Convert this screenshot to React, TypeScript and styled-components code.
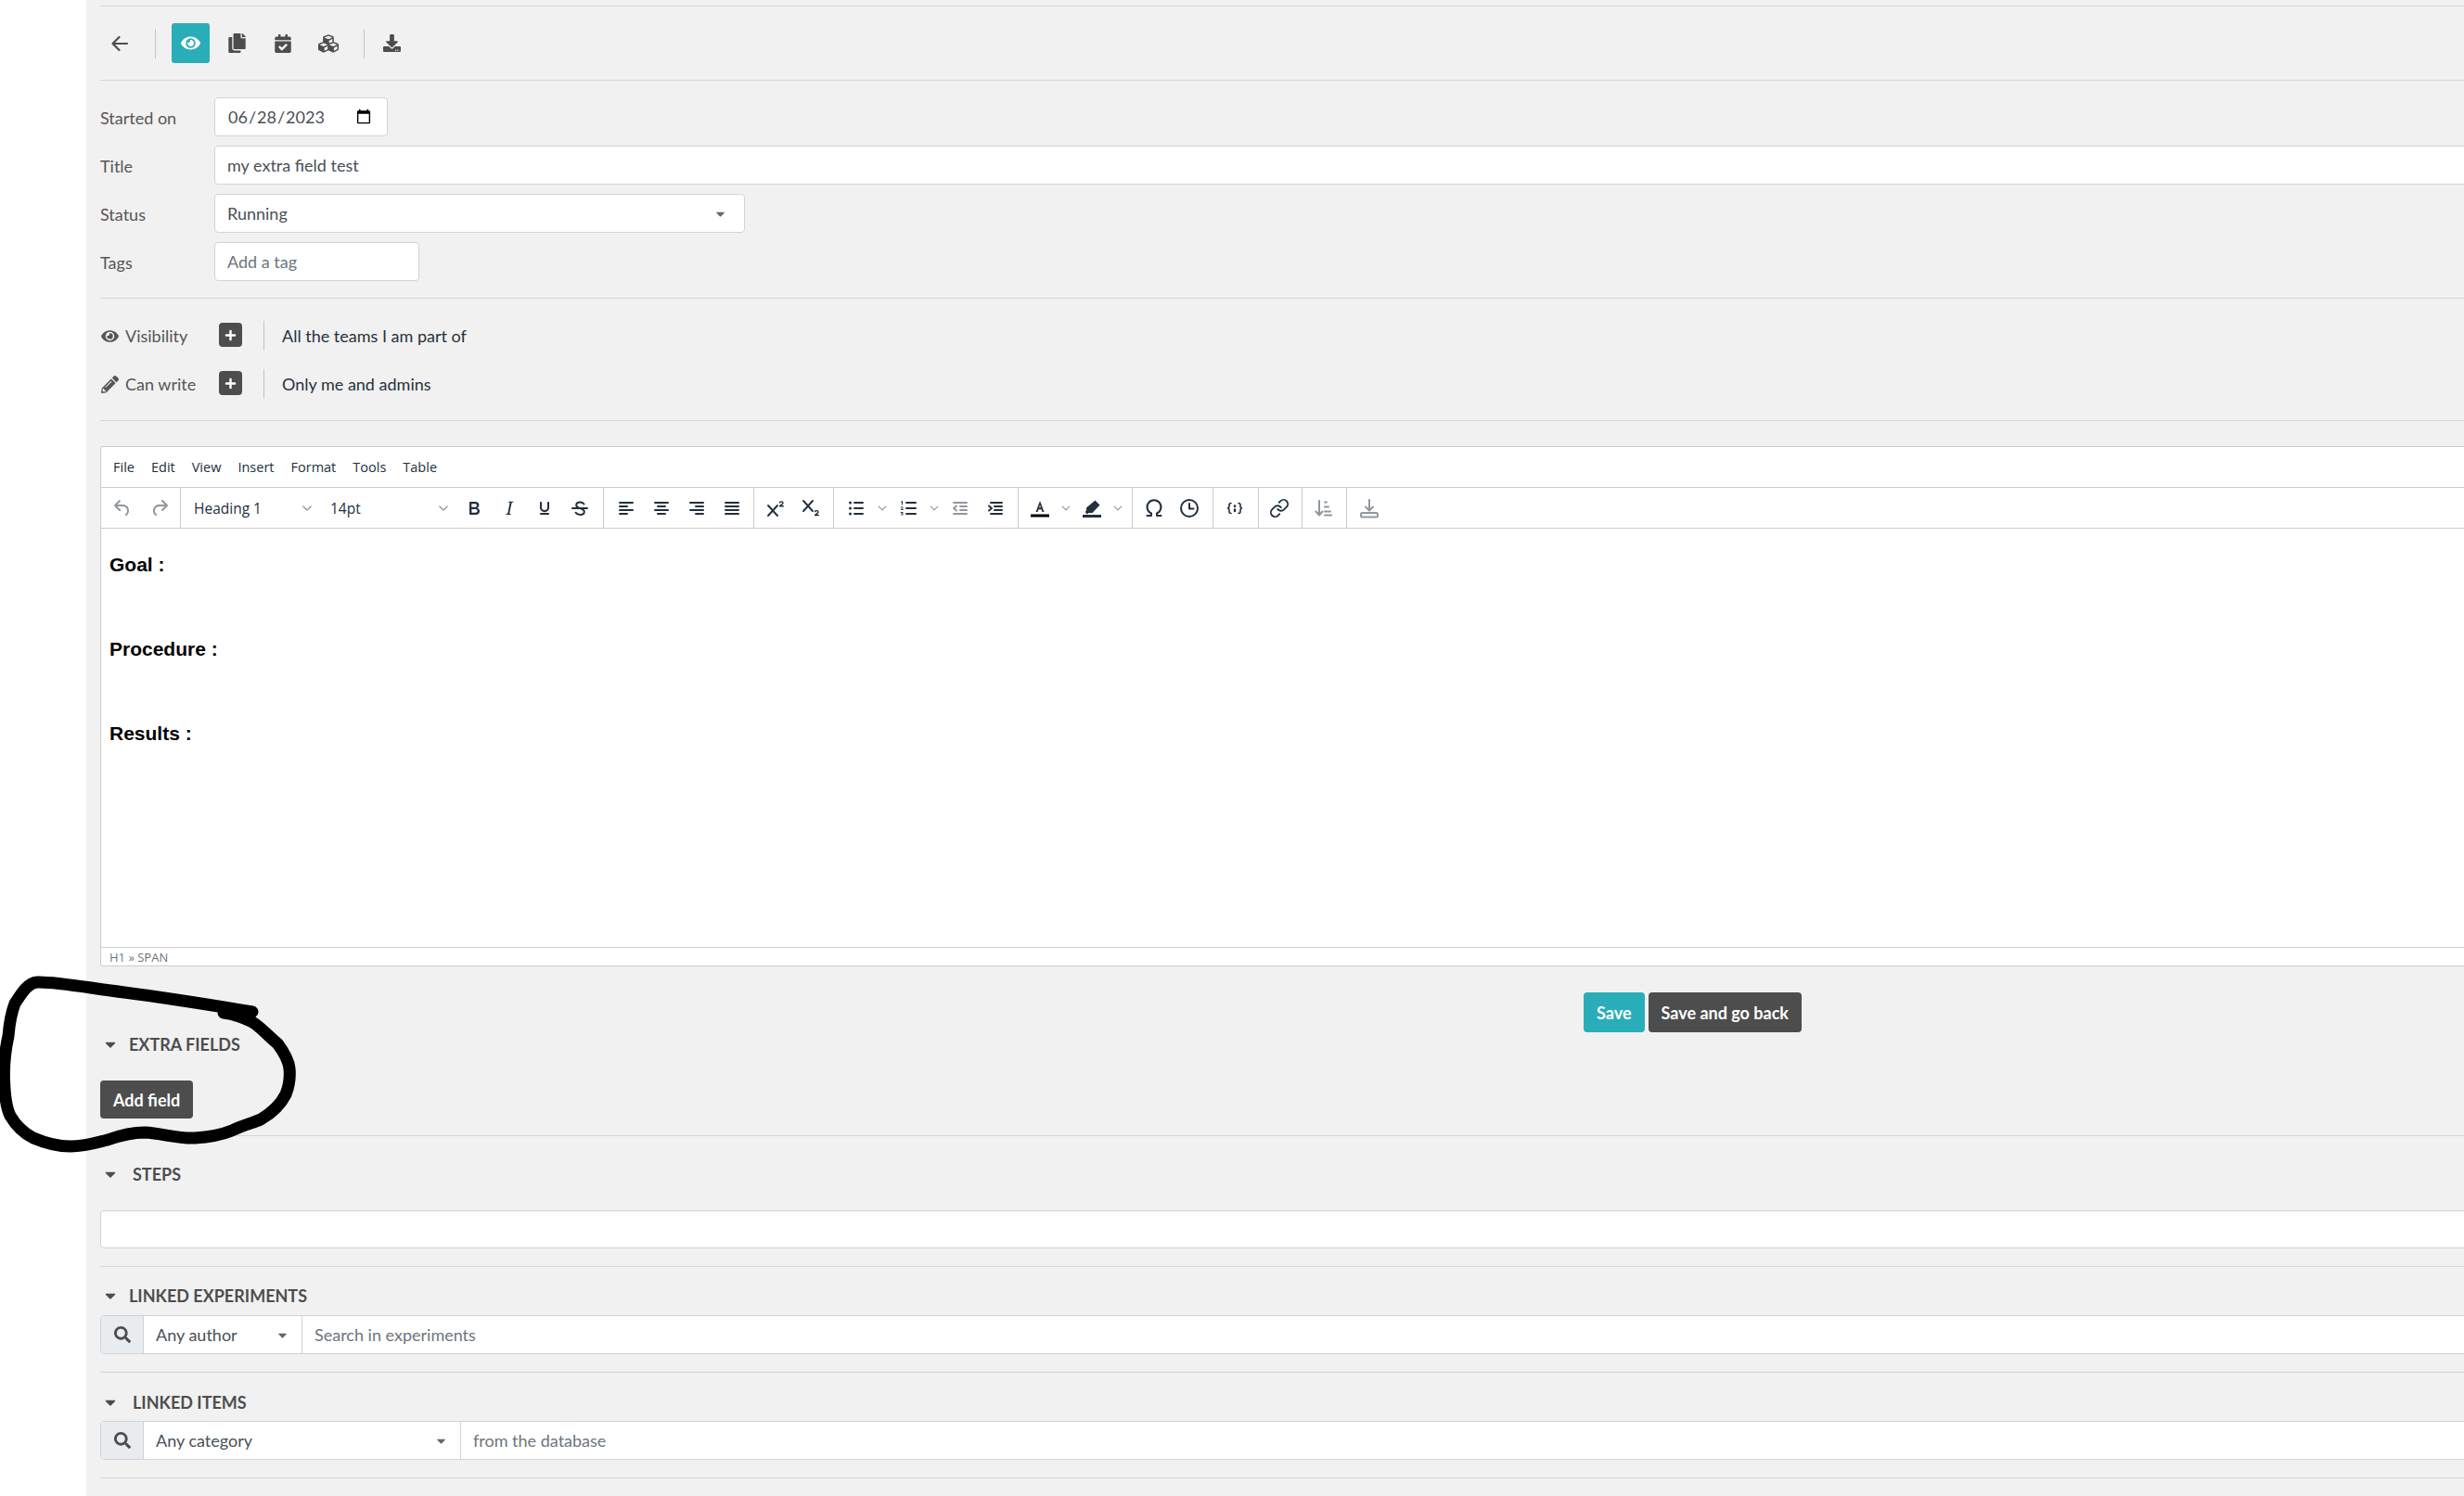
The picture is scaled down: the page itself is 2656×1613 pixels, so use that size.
import React from "react";
import styled, { createGlobalStyle } from "styled-components";
import { FaEye, FaCopy, FaCalendarCheck, FaCubes, FaDownload, FaPencilAlt, FaPlus, FaSearch, FaCaretDown } from "react-icons/fa";

const Global = createGlobalStyle`
  html, body { margin: 0; padding: 0; height: 1613px; overflow: hidden; background: #fff; }
  body { font-family: Lato, "Open Sans", sans-serif; font-size: 18px; color: #4d4d4d; }
  * { box-sizing: border-box; }
`;

const Page = styled.div`position: relative; width: 2656px; height: 1613px; overflow: hidden;`;
const Main = styled.main`
  margin-left: 93px; width: 3463px; height: 1613px; background: #f1f1f1;
  padding: 6px 0 0 15px;
`;
const Content = styled.div`width: 3433px;`;
const Rule = styled.hr<{ $mt?: number }>`
  margin: ${p => p.$mt ?? 0}px 0 0; border: 0; height: 1px; background: #d6d6d6;
`;
const TopBar = styled.nav`display: flex; align-items: center; height: 79px;`;
const BarGroup = styled.div`display: flex; gap: 8.5px; align-items: center;`;
const BarSep = styled.span<{ $ml: number; $mr: number }>`
  width: 1px; height: 32px; background: #c4c4c4; margin: 0 ${p => p.$mr}px 0 ${p => p.$ml}px;
`;
const BarButton = styled.button<{ $active?: boolean; $size?: number }>`
  width: 41px; height: 43px; border: 0; border-radius: 3px; padding: 0;
  display: flex; align-items: center; justify-content: center; font-size: ${p => p.$size ?? 19}px;
  background: ${p => (p.$active ? "#29aeb9" : "transparent")};
  color: ${p => (p.$active ? "#fff" : "#4d4d4d")};
`;

const Form = styled.form`padding: 18px 0 18px; display: grid; grid-template-columns: 123px 1fr; row-gap: 10px; align-items: center;`;
const FieldLabel = styled.label`font-size: 18px; color: #565656; line-height: 44px; height: 42px;`;
const fieldBase = `
  height: 42px; border: 1px solid #ced4da; border-radius: 4px; background: #fff;
  font-family: Lato, sans-serif; font-size: 18px; color: #495057; padding: 0 14px 0 13px; outline: none; display: flex; align-items: center;
`;
const Input = styled.input<{ $width?: number }>`
  ${fieldBase}
  width: ${p => (p.$width ? `${p.$width}px` : "100%")};
  &::placeholder { color: #6c757d; opacity: 1; }
`;
const DateInput = styled(Input)`padding-right: 7px;`;
const SelectBox = styled.div<{ $width: number }>`
  ${fieldBase}
  width: ${p => p.$width}px; justify-content: space-between; padding-right: 18px;
`;
const Caret = styled(FaCaretDown)`color: #666; font-size: 15px;`;

const PermWrap = styled.section`padding: 14px 0 13px;`;
const PermRow = styled.div`display: flex; align-items: center; height: 52px;`;
const PermLabel = styled.div`
  width: 128px; display: flex; align-items: center; gap: 7px; font-size: 18px; color: #565656;
  svg { width: 19px; height: 19px; flex: none; margin-left: 1px; }
`;
const PlusButton = styled.button`
  width: 25px; height: 26px; border: 0; border-radius: 4px; background: #4d4d4d; color: #fff;
  display: flex; align-items: center; justify-content: center; padding: 0; font-size: 13px; margin-top: -2px;
`;
const PermSep = styled.span`width: 1px; height: 32px; background: #c4c4c4; margin: 0 19px 0 23px;`;
const PermValue = styled.span`font-size: 18px; color: #29323c;`;

const Editor = styled.section`
  margin-top: 27px; height: 561px; background: #fff; border: 1px solid #ccc; border-radius: 3px;
  display: flex; flex-direction: column; color: #222f3e; font-family: "Open Sans", sans-serif;
`;
const MenuBar = styled.div`height: 44px; flex: none; display: flex; align-items: center; font-size: 14.5px; color: #222f3e; border-bottom: 1px solid #ccc;`;
const MenuItem = styled.span<{ $x: number }>`margin-left: ${p => p.$x}px;`;
const ToolBar = styled.div`height: 44px; flex: none; display: flex; border-bottom: 1px solid #ccc;`;
const ToolGroup = styled.div<{ $pl: number; $pr: number; $gap?: number; $last?: boolean }>`
  display: flex; align-items: center; flex: none; gap: ${p => p.$gap ?? 0}px;
  padding: 0 ${p => p.$pr}px 0 ${p => p.$pl}px;
  border-right: ${p => (p.$last ? "0" : "1px solid #ccc")};
`;
const Tool = styled.span<{ $off?: boolean }>`
  width: 38px; height: 34px; display: flex; align-items: center; justify-content: center;
  color: ${p => (p.$off ? "rgba(34,47,62,.5)" : "#222f3e")};
`;
const Chevron = styled.span`width: 18px; display: flex; justify-content: center; color: rgba(34,47,62,.5);`;
const Dropdown = styled.span`
  width: 147px; height: 34px; display: flex; align-items: center; justify-content: space-between;
  padding: 0 4px 0 11px; font-size: 15.5px; color: #222f3e;
`;
const DropChev = styled.span`display: flex; color: rgba(34,47,62,.5);`;
const EditArea = styled.div`flex: 1; padding: 27px 0 0 9px; color: #000; font-family: "Liberation Sans", Arial, sans-serif;`;
const EditHeading = styled.h1`margin: 0 0 67px; font-size: 21px; line-height: 24px; font-weight: 700;`;
const StatusBar = styled.div`height: 20px; flex: none; border-top: 1px solid #ccc; padding-left: 9px; font-size: 13px; line-height: 21px; color: rgba(34,47,62,.7);`;

const Actions = styled.div`display: flex; justify-content: center; gap: 4px; padding-top: 28px;`;
const Button = styled.button<{ $teal?: boolean }>`
  height: 43px; padding: 0 14px; border: 0; border-radius: 4px; color: #fff; font-family: Lato, sans-serif;
  font-weight: 700; font-size: 18px; background: ${p => (p.$teal ? "#29aeb9" : "#4d4d4d")};
`;
const AddButton = styled(Button)`display: block; height: 41px; margin-top: 27px;`;
const Head = styled.h3<{ $gap: number; $mt: number }>`
  margin: ${p => p.$mt}px 0 0; height: 24px; display: flex; align-items: center; padding-left: 5px;
  gap: ${p => p.$gap}px; font-size: 18px; font-weight: 700; text-transform: uppercase; color: #4d4d4d;
  svg { width: 12px; flex: none; color: #4d4d4d; }
`;
const StepInput = styled(Input)`display: block; margin-top: 27px; height: 41px;`;
const SearchGroup = styled.div<{ $mt: number }>`
  margin-top: ${p => p.$mt}px; height: 42px; display: flex; border: 1px solid #ced4da; border-radius: 4px; background: #fff;
  font-size: 18px; color: #495057; overflow: hidden;
`;
const Addon = styled.span`width: 46px; background: #e9ecef; display: flex; align-items: center; justify-content: center; color: #4d4d4d; border-right: 1px solid #ced4da; font-size: 18px;`;
const GroupSelect = styled.div<{ $width: number }>`
  width: ${p => p.$width}px; flex: none; padding: 0 13px 0 13px; display: flex; align-items: center; justify-content: space-between; border-right: 1px solid #ced4da;
`;
const GroupInput = styled.input`
  flex: 1; border: 0; outline: none; padding: 0 13px; font-family: Lato, sans-serif; font-size: 18px;
  &::placeholder { color: #6c757d; opacity: 1; }
`;
const Scribble = styled.svg`position: absolute; left: 0; top: 1040px; width: 330px; height: 210px; pointer-events: none;`;

const Ico = styled.svg`width: 24px; height: 24px; fill: currentColor; display: block;`;
const Stroke = styled.svg`width: 24px; height: 24px; fill: none; stroke: currentColor; stroke-width: 2; stroke-linecap: round; stroke-linejoin: round; display: block;`;

const P = ({ d }: { d: string }) => <Ico viewBox="0 0 24 24"><path d={d} /></Ico>;
const Chev = () => <Stroke viewBox="0 0 24 24" style={{ width: 20, height: 20, strokeWidth: 1.6 }}><path d="m7 9.500 5 5 5-5" /></Stroke>;
const Lines = ({ rows }: { rows: [number, number][] }) => (
  <Ico viewBox="0 0 24 24">{rows.map(([x, w], i) => <rect key={i} x={x} y={5 + i * 4} width={w} height={2} rx={1} />)}</Ico>
);

const undo = "M6.4 8H12c3.7 0 6.2 2 6.8 5.1.6 2.7-.4 5.6-2.3 6.8a1 1 0 0 1-1-1.8c1.1-.6 1.8-2.7 1.4-4.6-.5-2.1-2.1-3.5-4.9-3.5H6.4l3.3 3.3a1 1 0 1 1-1.4 1.4l-5-5a1 1 0 0 1 0-1.4l5-5a1 1 0 0 1 1.4 1.4L6.4 8Z";
const redo = "M17.6 10H12c-2.8 0-4.4 1.4-4.9 3.5-.4 2 .3 4 1.4 4.6a1 1 0 1 1-1 1.8c-2-1.2-2.9-4.1-2.3-6.8.6-3 3-5.1 6.8-5.1h5.6l-3.3-3.3a1 1 0 1 1 1.4-1.4l5 5a1 1 0 0 1 0 1.4l-5 5a1 1 0 0 1-1.4-1.4l3.3-3.3Z";
const bold = "M7.8 19c-.3 0-.5 0-.6-.2l-.2-.5V5.7c0-.2 0-.4.2-.5l.6-.2h5c1.5 0 2.7.3 3.5 1 .7.6 1.1 1.4 1.1 2.5a3 3 0 0 1-.6 1.9c-.4.6-1 1-1.6 1.2.4.1.9.3 1.3.6s.8.7 1 1.2c.4.4.5 1 .5 1.6 0 1.3-.4 2.3-1.3 3-.8.7-2.1 1-3.8 1H7.8Zm5-8.3c.6 0 1.2-.1 1.6-.5.4-.3.6-.7.6-1.3 0-1.1-.8-1.7-2.3-1.7H9.3v3.5h3.4Zm.5 6c.7 0 1.3-.1 1.7-.4.4-.4.6-.9.6-1.5s-.2-1-.7-1.4c-.4-.3-1-.4-2-.4H9.4v3.8h4Z";
const italic = "m16.7 4.7-.1.9h-.3c-.6 0-1 0-1.4.3-.3.3-.4.6-.5 1.1l-2.1 9.8v.6c0 .5.4.8 1.4.8h.2l-.2.8H8l.2-.8h.2c1.1 0 1.8-.5 2-1.5l2-9.8.1-.5c0-.6-.4-.8-1.4-.8h-.3l.2-.9h5.8Z";
const underline = "M16 5c.6 0 1 .4 1 1v5.5a4 4 0 0 1-.4 1.8l-1 1.4a5.3 5.3 0 0 1-5.5 1 5 5 0 0 1-1.6-1c-.5-.4-.8-.9-1.1-1.4a4 4 0 0 1-.4-1.8V6c0-.6.4-1 1-1s1 .4 1 1v5.5c0 .3 0 .6.2 1l.6.7a3.3 3.3 0 0 0 2.2.8 3.4 3.4 0 0 0 2.2-.8c.3-.2.4-.5.6-.8l.2-.9V6c0-.6.4-1 1-1ZM8 17h8c.6 0 1 .4 1 1s-.4 1-1 1H8a1 1 0 0 1 0-2Z";
const marker = "m15.5 3.5 5 5-8 8.500H8.400L7 18.400 4.600 16l1.400-1.400v-3.200l9.500-7.900ZM2 19h20v3H2Z";

const Back = () => <Stroke viewBox="0 0 24 24" style={{ strokeWidth: 2.2 }}><path d="M20 12H5M11.500 5 4.500 12l7 7" /></Stroke>;
const Strike = () => <Stroke viewBox="0 0 24 24"><path d="M16.500 7.500C15.500 6 14 5.500 12.300 5.500 9.800 5.500 8.200 6.800 8.200 8.700c0 1.600 1.200 2.500 3.800 3.300 3.200.9 4.800 1.800 4.800 3.800 0 2-1.800 3.200-4.500 3.200-2.200 0-3.800-.9-4.800-2.300M4 12h16" /></Stroke>;
const Sup = () => <Stroke viewBox="0 0 24 24" style={{ strokeWidth: 1.9 }}><path d="m4 9 10 11M14 9 4 20" /><path d="M16.500 5.800c.3-1.200 3.500-1.400 3.500.5 0 1.300-2 2-3.500 3.500h3.800" strokeWidth="1.400" /></Stroke>;
const Sub = () => <Stroke viewBox="0 0 24 24" style={{ strokeWidth: 1.9 }}><path d="m4 4 10 11M14 4 4 15" /><path d="M16.500 15.500c.3-1.200 3.500-1.400 3.500.5 0 1.300-2 2-3.500 3.500h3.800" strokeWidth="1.400" /></Stroke>;
const Bullets = () => <Ico viewBox="0 0 24 24"><circle cx="5.500" cy="6" r="1.500" /><circle cx="5.500" cy="12" r="1.500" /><circle cx="5.500" cy="18" r="1.500" /><rect x="9" y="5" width="11" height="2" rx="1" /><rect x="9" y="11" width="11" height="2" rx="1" /><rect x="9" y="17" width="11" height="2" rx="1" /></Ico>;
const Numbers = () => <Stroke viewBox="0 0 24 24"><path d="M10 6h10M10 12h10M10 18h10" /><path d="M4.500 5 5.500 4.500V8M4.200 11c.5-.6 2-.5 2 .4 0 .7-1.300 1-2 2h2.200M4.200 16.500h2l-1 1c.8 0 1.200.3 1.200.9 0 .8-1.400 1-2.200.4" strokeWidth="1" /></Stroke>;
const Outdent = () => <Stroke viewBox="0 0 24 24"><path d="M5 6h14M12 10h7M12 14h7M5 18h14M8 9.500 5 12l3 2.500" /></Stroke>;
const Indent = () => <Stroke viewBox="0 0 24 24"><path d="M7 6h12M11 10h8M11 14h8M7 18h12M5 9.500 8 12l-3 2.500" /></Stroke>;
const FontColor = () => <Ico viewBox="0 0 24 24"><rect x="2" y="18.500" width="20" height="3" fill="#000" /><path d="M12 4 7.500 16h2l1-2.800h3l1 2.800h2L12 4Zm-.9 7.300L12 8.500l.9 2.800h-1.800Z" /></Ico>;
const Marker = () => <Ico viewBox="0 0 24 24"><path d={marker} /></Ico>;
const Omega = () => <Stroke viewBox="0 0 24 24"><path d="M4.500 20H9v-2.500a7.500 7.500 0 1 1 6 0V20h4.500" /></Stroke>;
const Clock = () => <Stroke viewBox="0 0 24 24"><circle cx="12" cy="12" r="9" /><path d="M12 7v5.500h4.500" /></Stroke>;
const Code = () => <Stroke viewBox="0 0 24 24" style={{ strokeWidth: 1.6 }}><path d="M8 6.500c-1.500 0-2 .7-2 2V10c0 1-.5 1.700-1.500 2C5.500 12.300 6 13 6 14v1.500c0 1.300.5 2 2 2M16 6.500c1.500 0 2 .7 2 2V10c0 1 .5 1.700 1.500 2-1 .3-1.500 1-1.500 2v1.500c0 1.300-.5 2-2 2" /><path d="M12 9.500v.6M12 13.500v1.500" strokeWidth="2.400" /></Stroke>;
const Chain = () => <Stroke viewBox="0 0 24 24" style={{ width: 22, height: 22 }}><path d="M10 13a5 5 0 0 0 7.540.54l3-3a5 5 0 0 0-7.070-7.070l-1.720 1.710" /><path d="M14 11a5 5 0 0 0-7.540-.54l-3 3a5 5 0 0 0 7.070 7.070l1.710-1.710" /></Stroke>;
const Sort = () => <Stroke viewBox="0 0 24 24"><path d="M7 4v15M3.500 15.500 7 19.500l3.500-4" /><path d="M13 5.500h2M13 10.500h4M13 15.500h6M13 19.500h7" /></Stroke>;
const Stamp = () => <Stroke viewBox="0 0 24 24"><path d="M12 3v11M8 10.500l4 4 4-4" /><rect x="3" y="17" width="18" height="4.500" rx="1.500" /></Stroke>;

const menus: [string, number][] = [["File", 13], ["Edit", 18], ["View", 18], ["Insert", 18], ["Format", 18], ["Tools", 18], ["Table", 18]];

export default function App() {
  return (
    <Page>
      <Global />
      <Main>
        <Content>
          <Rule />
          <TopBar>
            <BarButton aria-label="Back"><Back /></BarButton>
            <BarSep $ml={18} $mr={17} />
            <BarGroup>
              <BarButton $active $size={21} aria-label="View"><FaEye /></BarButton>
              <BarButton $size={21} aria-label="Duplicate"><FaCopy /></BarButton>
              <BarButton $size={20} aria-label="Schedule"><FaCalendarCheck /></BarButton>
              <BarButton $size={22} aria-label="Items"><FaCubes /></BarButton>
            </BarGroup>
            <BarSep $ml={17} $mr={9} />
            <BarButton aria-label="Export"><FaDownload /></BarButton>
          </TopBar>
          <Rule />
          <Form>
            <FieldLabel>Started on</FieldLabel>
            <DateInput type="date" defaultValue="2023-06-28" $width={187} />
            <FieldLabel>Title</FieldLabel>
            <Input defaultValue="my extra field test" />
            <FieldLabel>Status</FieldLabel>
            <SelectBox $width={572}>Running<Caret /></SelectBox>
            <FieldLabel>Tags</FieldLabel>
            <Input placeholder="Add a tag" $width={221} />
          </Form>
          <Rule />
          <PermWrap>
            <PermRow>
              <PermLabel><FaEye />Visibility</PermLabel>
              <PlusButton aria-label="Add"><FaPlus /></PlusButton>
              <PermSep />
              <PermValue>All the teams I am part of</PermValue>
            </PermRow>
            <PermRow>
              <PermLabel><FaPencilAlt />Can write</PermLabel>
              <PlusButton aria-label="Add"><FaPlus /></PlusButton>
              <PermSep />
              <PermValue>Only me and admins</PermValue>
            </PermRow>
          </PermWrap>
          <Rule />
          <Editor>
            <MenuBar>{menus.map(([m, x]) => <MenuItem key={m} $x={x}>{m}</MenuItem>)}</MenuBar>
            <ToolBar>
              <ToolGroup $pl={4} $pr={3} $gap={2}>
                <Tool $off><P d={undo} /></Tool>
                <Tool $off><P d={redo} /></Tool>
              </ToolGroup>
              <ToolGroup $pl={3} $pr={6}>
                <Dropdown>Heading 1<DropChev><Chev /></DropChev></Dropdown>
                <Dropdown>14pt<DropChev><Chev /></DropChev></Dropdown>
                <Tool><P d={bold} /></Tool>
                <Tool><P d={italic} /></Tool>
                <Tool><P d={underline} /></Tool>
                <Tool><Strike /></Tool>
              </ToolGroup>
              <ToolGroup $pl={5} $pr={4}>
                <Tool><Lines rows={[[4, 16], [4, 10], [4, 16], [4, 10]]} /></Tool>
                <Tool><Lines rows={[[4, 16], [7, 10], [4, 16], [7, 10]]} /></Tool>
                <Tool><Lines rows={[[4, 16], [10, 10], [4, 16], [10, 10]]} /></Tool>
                <Tool><Lines rows={[[4, 16], [4, 16], [4, 16], [4, 16]]} /></Tool>
              </ToolGroup>
              <ToolGroup $pl={4} $pr={5}>
                <Tool><Sup /></Tool>
                <Tool><Sub /></Tool>
              </ToolGroup>
              <ToolGroup $pl={5} $pr={5}>
                <Tool><Bullets /></Tool>
                <Chevron><Chev /></Chevron>
                <Tool><Numbers /></Tool>
                <Chevron><Chev /></Chevron>
                <Tool $off><Outdent /></Tool>
                <Tool><Indent /></Tool>
              </ToolGroup>
              <ToolGroup $pl={4} $pr={6}>
                <Tool><FontColor /></Tool>
                <Chevron><Chev /></Chevron>
                <Tool><Marker /></Tool>
                <Chevron><Chev /></Chevron>
              </ToolGroup>
              <ToolGroup $pl={4} $pr={6}>
                <Tool><Omega /></Tool>
                <Tool><Clock /></Tool>
              </ToolGroup>
              <ToolGroup $pl={4} $pr={6}><Tool><Code /></Tool></ToolGroup>
              <ToolGroup $pl={3} $pr={5}><Tool><Chain /></Tool></ToolGroup>
              <ToolGroup $pl={4} $pr={5}><Tool $off><Sort /></Tool></ToolGroup>
              <ToolGroup $pl={5} $pr={0} $last><Tool $off><Stamp /></Tool></ToolGroup>
            </ToolBar>
            <EditArea>
              <EditHeading>Goal :</EditHeading>
              <EditHeading>Procedure :</EditHeading>
              <EditHeading>Results :</EditHeading>
            </EditArea>
            <StatusBar>H1 » SPAN</StatusBar>
          </Editor>
          <Actions>
            <Button $teal>Save</Button>
            <Button>Save and go back</Button>
          </Actions>
          <Head $gap={14} $mt={1}><FaCaretDown />Extra fields</Head>
          <AddButton>Add field</AddButton>
          <Rule $mt={18} />
          <Head $gap={18} $mt={29}><FaCaretDown />Steps</Head>
          <StepInput />
          <Rule $mt={19} />
          <Head $gap={14} $mt={19}><FaCaretDown />Linked experiments</Head>
          <SearchGroup $mt={9}>
            <Addon><FaSearch /></Addon>
            <GroupSelect $width={171}>Any author<Caret /></GroupSelect>
            <GroupInput placeholder="Search in experiments" />
          </SearchGroup>
          <Rule $mt={19} />
          <Head $gap={18} $mt={20}><FaCaretDown />Linked items</Head>
          <SearchGroup $mt={8}>
            <Addon><FaSearch /></Addon>
            <GroupSelect $width={342}>Any category<Caret /></GroupSelect>
            <GroupInput placeholder="from the database" />
          </SearchGroup>
          <Rule $mt={19} />
        </Content>
      </Main>
      <Scribble viewBox="0 1040 330 210" aria-hidden="true">
        <path
          d="M272 1091 C 230 1084 180 1076 134 1070 C 100 1066 60 1058 40 1059 C 30 1060 24 1070 16 1082 C 11 1095 10 1105 9 1117 C 5 1135 4 1150 4.500 1164 C 5 1180 7 1195 11 1203 C 18 1215 26 1222 36 1227 C 50 1233 62 1236 76 1236 C 92 1236 104 1232 116 1229 C 130 1224 142 1221 156 1221 C 175 1222 192 1228 210 1227 C 228 1226 240 1223 250 1219 C 262 1213 272 1211 281 1207 C 293 1200 302 1192 308 1180 C 312 1170 313 1162 312 1152 C 311 1142 305 1133 299 1125 C 292 1120 282 1108 272 1102 C 262 1097 250 1093 241 1092"
          fill="none" stroke="#000" strokeWidth="13" strokeLinecap="round" strokeLinejoin="round"
        />
      </Scribble>
    </Page>
  );
}
